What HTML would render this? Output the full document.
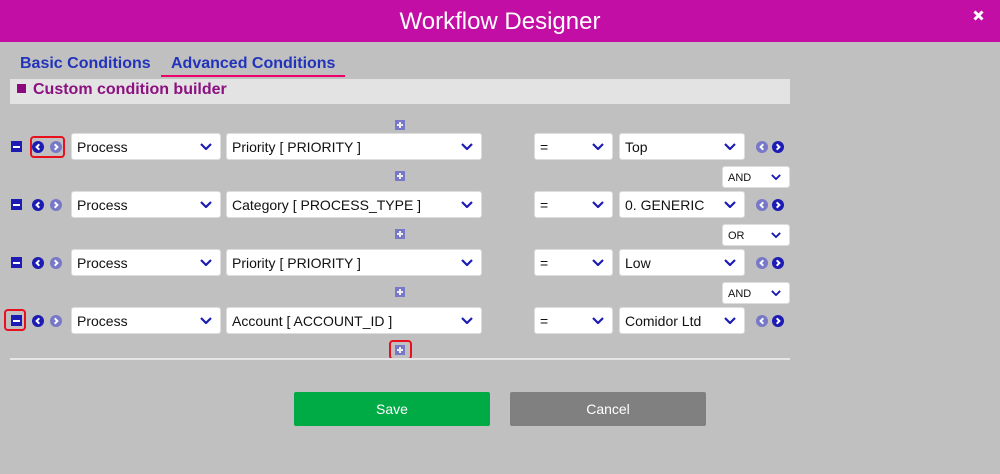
<!DOCTYPE html>
<html><head><meta charset="utf-8"><style>
*{margin:0;padding:0;box-sizing:border-box}
body{width:1000px;height:474px;background:#c0c0c0;position:relative;overflow:hidden;font-family:"Liberation Sans",Arial,sans-serif}
.a{position:absolute}
.hdr{left:0;top:0;width:1000px;height:42px;background:#c20ea4;color:#fff;font-size:24px;text-align:center;line-height:43px}
.sel{position:absolute;background:#fff;border-radius:3px;height:27px;font-size:14px;color:#111;line-height:27px;padding-left:5px;border:1px solid #ddd}
.sel svg{position:absolute;right:8px;top:9px}
.sm{height:22px;line-height:22px;font-size:11px}
.sm svg{top:7px}
.minus{position:absolute;width:11px;height:11px;background:#1c1cb4}
.minus:after{content:"";position:absolute;left:2px;top:5px;width:7px;height:1.5px;background:#fff}
.plus{position:absolute;width:10px;height:10px;background:#7878c8}
.plus:before{content:"";position:absolute;left:2px;top:4px;width:6px;height:2px;background:#eee}
.plus:after{content:"";position:absolute;left:4px;top:2px;width:2px;height:6px;background:#eee}
.red{position:absolute;border:2px solid #e8101c;border-radius:4px}
</style></head><body>
<div class="a hdr">Workflow Designer</div>
<svg class="a" style="left:973px;top:10px" width="11" height="11"><path d="M1.5 1.5L9.5 9.5M9.5 1.5L1.5 9.5" stroke="#fff" stroke-width="3"/></svg>
<div class="a" style="left:20px;top:55px;font-size:16px;font-weight:bold;color:#2233bb">Basic Conditions</div>
<div class="a" style="left:171px;top:55px;font-size:16px;font-weight:bold;color:#2233bb">Advanced Conditions</div>
<div class="a" style="left:161px;top:75px;width:184px;height:2px;background:#f0006a"></div>
<div class="a" style="left:10px;top:79px;width:780px;height:25px;background:#e3e3e3"></div>
<div class="a" style="left:17px;top:84px;width:9px;height:9px;background:#8b0a7d"></div>
<div class="a" style="left:33px;top:81px;font-size:16px;font-weight:bold;color:#8b1080">Custom condition builder</div>

<svg width="0" height="0" style="position:absolute"><defs>
<symbol id="cv" viewBox="0 0 12 7"><polyline points="1,1 6,6 11,1" fill="none" stroke="#1c1cb4" stroke-width="2.2"/></symbol>
<symbol id="lt" viewBox="0 0 12 12"><circle cx="6" cy="6" r="6" fill="currentColor"/><polyline points="7.3,3.3 4.6,6 7.3,8.7" fill="none" stroke="#fff" stroke-width="2"/></symbol>
<symbol id="rt" viewBox="0 0 12 12"><circle cx="6" cy="6" r="6" fill="currentColor"/><polyline points="4.7,3.3 7.4,6 4.7,8.7" fill="none" stroke="#fff" stroke-width="2"/></symbol>
</defs></svg>

<div class="plus" style="left:395px;top:120px"></div>
<div class="plus" style="left:395px;top:171px"></div>
<div class="plus" style="left:395px;top:229px"></div>
<div class="plus" style="left:395px;top:287px"></div>
<div class="plus" style="left:395px;top:345px"></div>

<div class="minus" style="left:11px;top:141px"></div>
<svg class="a" style="left:32px;top:141px;color:#1c1cb4" width="12" height="12"><use href="#lt"/></svg>
<svg class="a" style="left:50px;top:141px;color:#7878c8" width="12" height="12"><use href="#rt"/></svg>
<div class="sel" style="left:71px;top:133px;width:150px">Process<svg width="12" height="7"><use href="#cv"/></svg></div>
<div class="sel" style="left:226px;top:133px;width:256px">Priority [ PRIORITY ]<svg width="12" height="7"><use href="#cv"/></svg></div>
<div class="sel" style="left:534px;top:133px;width:79px">=<svg width="12" height="7"><use href="#cv"/></svg></div>
<div class="sel" style="left:619px;top:133px;width:126px">Top<svg width="12" height="7"><use href="#cv"/></svg></div>
<svg class="a" style="left:756px;top:141px;color:#7878c8" width="12" height="12"><use href="#lt"/></svg>
<svg class="a" style="left:772px;top:141px;color:#1c1cb4" width="12" height="12"><use href="#rt"/></svg>
<div class="sel sm" style="left:722px;top:166px;width:68px">AND<svg width="10" height="6"><use href="#cv"/></svg></div>

<div class="minus" style="left:11px;top:199px"></div>
<svg class="a" style="left:32px;top:199px;color:#1c1cb4" width="12" height="12"><use href="#lt"/></svg>
<svg class="a" style="left:50px;top:199px;color:#7878c8" width="12" height="12"><use href="#rt"/></svg>
<div class="sel" style="left:71px;top:191px;width:150px">Process<svg width="12" height="7"><use href="#cv"/></svg></div>
<div class="sel" style="left:226px;top:191px;width:256px">Category [ PROCESS_TYPE ]<svg width="12" height="7"><use href="#cv"/></svg></div>
<div class="sel" style="left:534px;top:191px;width:79px">=<svg width="12" height="7"><use href="#cv"/></svg></div>
<div class="sel" style="left:619px;top:191px;width:126px">0. GENERIC<svg width="12" height="7"><use href="#cv"/></svg></div>
<svg class="a" style="left:756px;top:199px;color:#7878c8" width="12" height="12"><use href="#lt"/></svg>
<svg class="a" style="left:772px;top:199px;color:#1c1cb4" width="12" height="12"><use href="#rt"/></svg>
<div class="sel sm" style="left:722px;top:224px;width:68px">OR<svg width="10" height="6"><use href="#cv"/></svg></div>

<div class="minus" style="left:11px;top:257px"></div>
<svg class="a" style="left:32px;top:257px;color:#1c1cb4" width="12" height="12"><use href="#lt"/></svg>
<svg class="a" style="left:50px;top:257px;color:#7878c8" width="12" height="12"><use href="#rt"/></svg>
<div class="sel" style="left:71px;top:249px;width:150px">Process<svg width="12" height="7"><use href="#cv"/></svg></div>
<div class="sel" style="left:226px;top:249px;width:256px">Priority [ PRIORITY ]<svg width="12" height="7"><use href="#cv"/></svg></div>
<div class="sel" style="left:534px;top:249px;width:79px">=<svg width="12" height="7"><use href="#cv"/></svg></div>
<div class="sel" style="left:619px;top:249px;width:126px">Low<svg width="12" height="7"><use href="#cv"/></svg></div>
<svg class="a" style="left:756px;top:257px;color:#7878c8" width="12" height="12"><use href="#lt"/></svg>
<svg class="a" style="left:772px;top:257px;color:#1c1cb4" width="12" height="12"><use href="#rt"/></svg>
<div class="sel sm" style="left:722px;top:282px;width:68px">AND<svg width="10" height="6"><use href="#cv"/></svg></div>

<div class="minus" style="left:11px;top:315px"></div>
<svg class="a" style="left:32px;top:315px;color:#1c1cb4" width="12" height="12"><use href="#lt"/></svg>
<svg class="a" style="left:50px;top:315px;color:#7878c8" width="12" height="12"><use href="#rt"/></svg>
<div class="sel" style="left:71px;top:307px;width:150px">Process<svg width="12" height="7"><use href="#cv"/></svg></div>
<div class="sel" style="left:226px;top:307px;width:256px">Account [ ACCOUNT_ID ]<svg width="12" height="7"><use href="#cv"/></svg></div>
<div class="sel" style="left:534px;top:307px;width:79px">=<svg width="12" height="7"><use href="#cv"/></svg></div>
<div class="sel" style="left:619px;top:307px;width:126px">Comidor Ltd<svg width="12" height="7"><use href="#cv"/></svg></div>
<svg class="a" style="left:756px;top:315px;color:#7878c8" width="12" height="12"><use href="#lt"/></svg>
<svg class="a" style="left:772px;top:315px;color:#1c1cb4" width="12" height="12"><use href="#rt"/></svg>

<div class="red" style="left:30px;top:136px;width:35px;height:22px"></div>
<div class="red" style="left:4px;top:309px;width:22px;height:22px"></div>
<div class="red" style="left:389px;top:340px;width:23px;height:20px"></div>

<div class="a" style="left:10px;top:358px;width:780px;height:2px;background:#e6e6e6"></div>

<div class="a" style="left:294px;top:392px;width:196px;height:34px;background:#00aa45;border-radius:2px;color:#fff;font-size:14px;text-align:center;line-height:34px">Save</div>
<div class="a" style="left:510px;top:392px;width:196px;height:34px;background:#808080;border-radius:2px;color:#fff;font-size:14px;text-align:center;line-height:34px">Cancel</div>
</body></html>
